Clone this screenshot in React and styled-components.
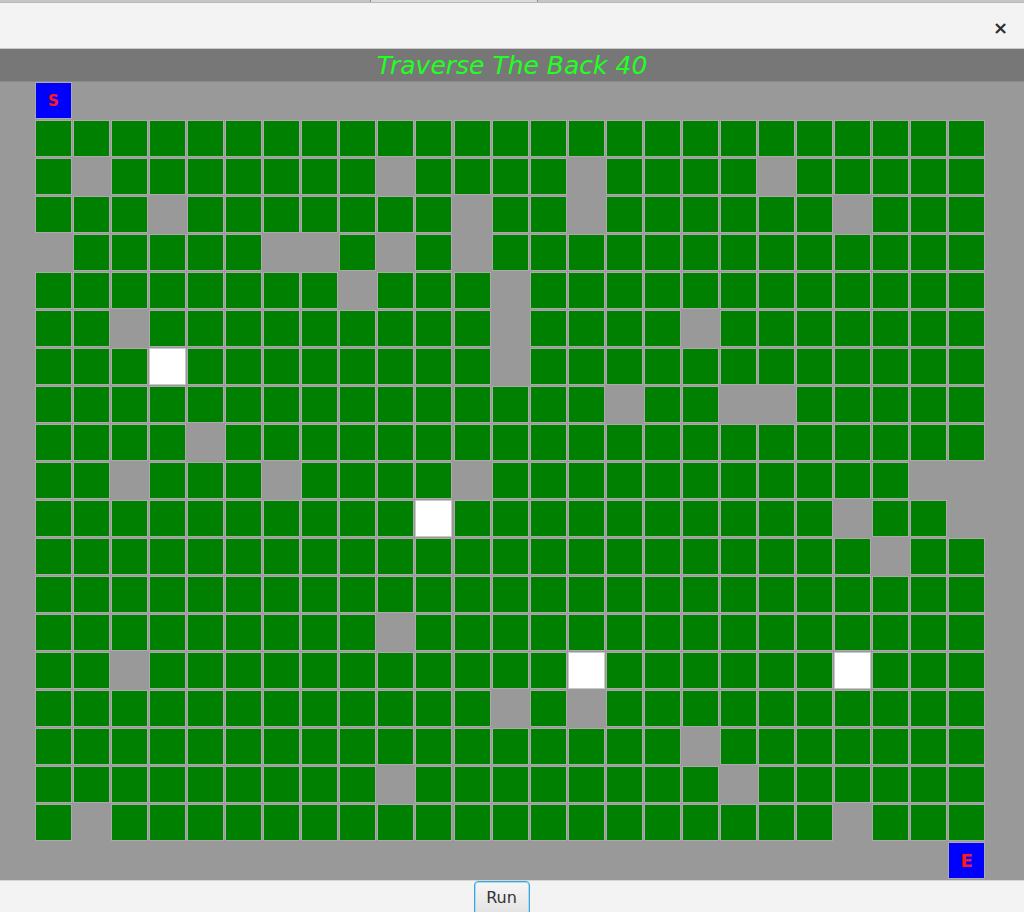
import React from "react";
import styled, { createGlobalStyle } from "styled-components";

const GlobalStyle = createGlobalStyle`
  html, body { margin: 0; padding: 0; background: #f3f3f3; }
  body { font-family: "DejaVu Sans", "Liberation Sans", sans-serif; overflow: hidden; }
  * { box-sizing: border-box; }
`;

const COLS = 25;
const ROWS = 21;

const EMPTY = {
  2: [1, 9, 14, 19],
  3: [3, 11, 14, 21],
  4: [0, 6, 7, 9, 11],
  5: [8, 12],
  6: [2, 12, 17],
  7: [12],
  8: [15, 18, 19],
  9: [4],
  10: [2, 6, 11, 23, 24],
  11: [21, 24],
  12: [22],
  14: [9],
  15: [2],
  16: [12, 14],
  17: [17],
  18: [9, 18],
  19: [1, 21],
};
const WHITE = { 7: [3], 11: [10], 15: [14, 21] };

function kindOf(r, c) {
  if (r === 0) return c === 0 ? "start" : "empty";
  if (r === ROWS - 1) return c === COLS - 1 ? "end" : "empty";
  if ((WHITE[r] || []).includes(c)) return "visited";
  if ((EMPTY[r] || []).includes(c)) return "empty";
  return "grass";
}

const Window = styled.div`
  width: 1024px;
  height: 912px;
  display: flex;
  flex-direction: column;
  overflow: hidden;
`;

const Edge = styled.div`
  height: 3px;
  display: flex;
  background: #c6c6c6;
  border-bottom: 1px solid #b8b8b8;
`;

const EdgeTab = styled.div`
  margin-left: 370px;
  width: 168px;
  background: #dadada;
  border-left: 1px solid #8c8c8c;
  border-right: 1px solid #8c8c8c;
`;

const TitleBar = styled.div`
  height: 46px;
  background: #f3f3f3;
  border-bottom: 1px solid #c9c9c9;
  display: flex;
  align-items: center;
  justify-content: flex-end;
  padding-right: 16px;
  border-top-right-radius: 8px;
`;

const CloseGlyph = styled.span`
  font-family: "DejaVu Sans", sans-serif;
  font-weight: bold;
  font-size: 18px;
  color: #2e2e2e;
  margin-top: 4px;
`;

const Heading = styled.div`
  height: 33px;
  background: #777777;
  border-bottom: 1px solid #8a8a8a;
  display: flex;
  align-items: center;
  justify-content: center;
  color: #22ff22;
  font-family: "DejaVu Sans", sans-serif;
  font-style: italic;
  font-size: 25px;
  padding-left: 0px;
  padding-top: 1px;
`;

const Board = styled.div`
  height: 798px;
  background: #999999;
  padding-left: 35px;
  display: grid;
  grid-template-columns: repeat(${COLS}, 37px);
  grid-auto-rows: 37px;
  column-gap: 1.05px;
  row-gap: 1px;
`;

const fills = {
  grass: "#008000",
  visited: "#ffffff",
  start: "#0000ff",
  end: "#0000ff",
  empty: "transparent",
};

const Cell = styled.div`
  background: ${(p) => fills[p.$kind]};
  border: 1px solid ${(p) =>
    p.$kind === "empty" ? "transparent" : p.$kind === "visited" ? "#c8c8c8" : "#aaaaaa"};
  display: flex;
  align-items: center;
  justify-content: center;
  color: #ff1a1a;
  font-family: "DejaVu Sans", sans-serif;
  font-weight: bold;
  font-size: ${(p) => (p.$kind === "end" ? "18px" : "15px")};
`;

const Footer = styled.div`
  flex: 1;
  background: #f3f3f3;
  border-top: 1px solid #d6d6d6;
  display: flex;
  justify-content: center;
  align-items: flex-start;
  overflow: hidden;
`;

const RunButton = styled.button`
  width: 56px;
  height: 36px;
  margin-right: 21px;
  border: 1px solid #3aa6d8;
  box-shadow: inset 0 0 0 1px #a9dbf2;
  border-radius: 4px;
  background: linear-gradient(#f6f6f6, #e2e2e2);
  font-family: "DejaVu Sans", sans-serif;
  font-size: 16px;
  color: #333;
  padding: 0 0 4px;
`;

export default function App() {
  const cells = [];
  for (let r = 0; r < ROWS; r++) {
    for (let c = 0; c < COLS; c++) {
      const k = kindOf(r, c);
      cells.push(
        <Cell key={`${r}-${c}`} $kind={k}>
          {k === "start" ? "S" : k === "end" ? "E" : null}
        </Cell>
      );
    }
  }
  return (
    <>
      <GlobalStyle />
      <Window>
        <Edge>
          <EdgeTab />
        </Edge>
        <TitleBar>
          <CloseGlyph>×</CloseGlyph>
        </TitleBar>
        <Heading>Traverse The Back 40</Heading>
        <Board>{cells}</Board>
        <Footer>
          <RunButton>Run</RunButton>
        </Footer>
      </Window>
    </>
  );
}
